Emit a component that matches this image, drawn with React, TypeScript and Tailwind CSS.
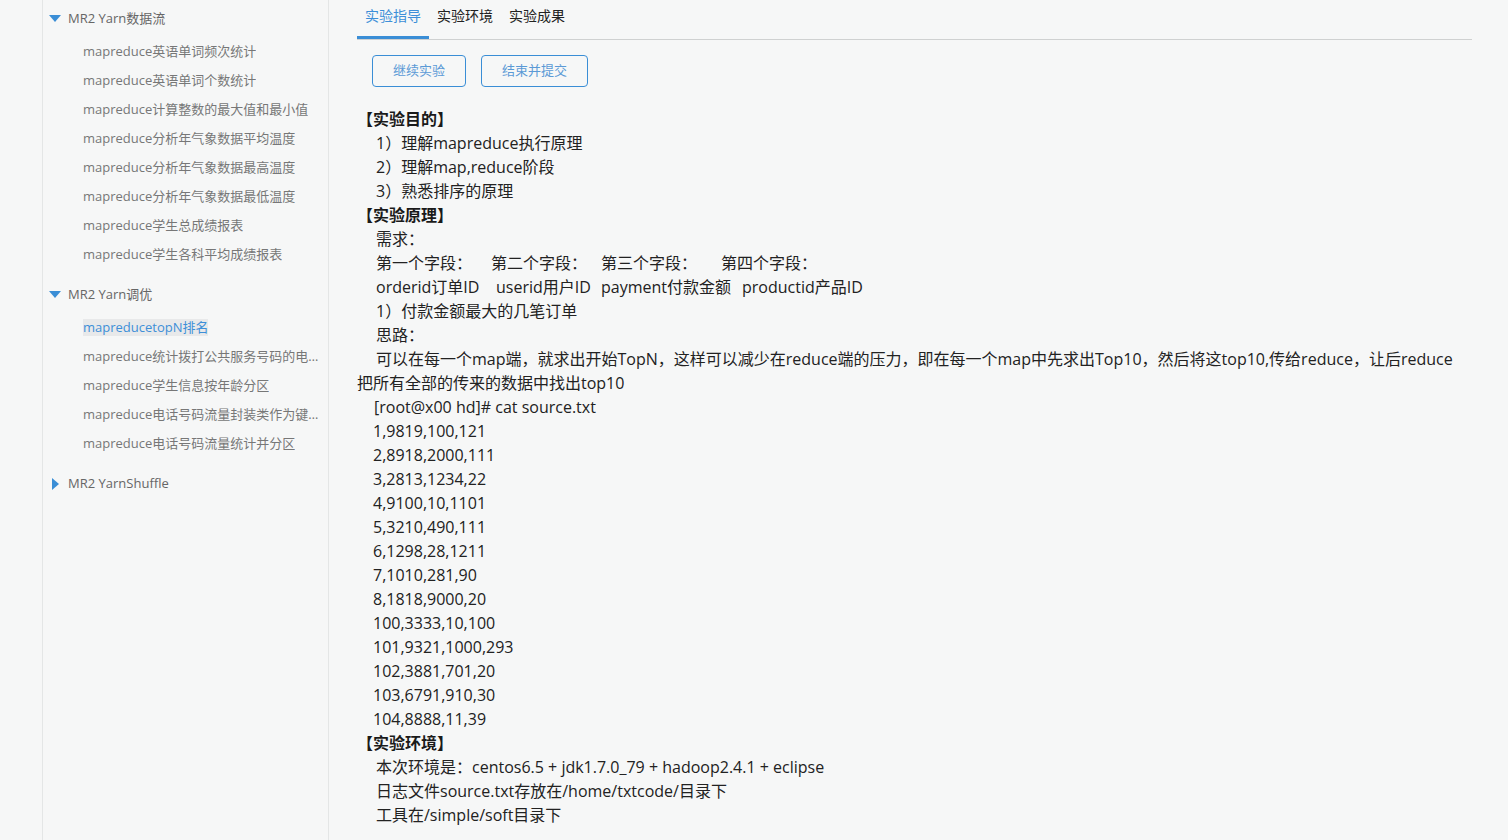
import React from "react";

type Group = {
  title: string;
  open: boolean;
  items: string[];
};

const groups: Group[] = [
  {
    title: "MR2 Yarn数据流",
    open: true,
    items: [
      "mapreduce英语单词频次统计",
      "mapreduce英语单词个数统计",
      "mapreduce计算整数的最大值和最小值",
      "mapreduce分析年气象数据平均温度",
      "mapreduce分析年气象数据最高温度",
      "mapreduce分析年气象数据最低温度",
      "mapreduce学生总成绩报表",
      "mapreduce学生各科平均成绩报表",
    ],
  },
  {
    title: "MR2 Yarn调优",
    open: true,
    items: [
      "mapreducetopN排名",
      "mapreduce统计拨打公共服务号码的电话信息",
      "mapreduce学生信息按年龄分区",
      "mapreduce电话号码流量封装类作为键值对",
      "mapreduce电话号码流量统计并分区",
    ],
  },
  { title: "MR2 YarnShuffle", open: false, items: [] },
];

const dataLines = [
  "1,9819,100,121",
  "2,8918,2000,111",
  "3,2813,1234,22",
  "4,9100,10,1101",
  "5,3210,490,111",
  "6,1298,28,1211",
  "7,1010,281,90",
  "8,1818,9000,20",
  "100,3333,10,100",
  "101,9321,1000,293",
  "102,3881,701,20",
  "103,6791,910,30",
  "104,8888,11,39",
];

function Caret({ open }: { open: boolean }) {
  return (
    <span className="w-[12px] h-[12px] flex items-center justify-center shrink-0">
      {open ? (
        <svg width="12" height="7" viewBox="0 0 12 7">
          <path d="M0 0 L12 0 L6 7 Z" fill="#3a8ed6" />
        </svg>
      ) : (
        <svg width="7" height="12" viewBox="0 0 7 12">
          <path d="M0 0 L7 6 L0 12 Z" fill="#3a8ed6" />
        </svg>
      )}
    </span>
  );
}

function Sidebar() {
  return (
    <aside className="w-[287px] shrink-0 ml-[42px] border-x border-[#e4e6e6] min-h-[840px] pt-[4px]">
      {groups.map((g) => (
        <div key={g.title} className="mb-[11px]">
          {/* group header */}
          <div className="h-[29px] flex items-center gap-[7px] pl-[6px] text-[13px] text-[#666]">
            <Caret open={g.open} />
            <span>{g.title}</span>
          </div>
          {g.open && (
            <ul className="mt-[4px]">
              {g.items.map((item) => {
                const active = item === "mapreducetopN排名";
                return (
                  <li
                    key={item}
                    className="h-[29px] flex items-center pl-[40px] pr-[8px] text-[13px] min-w-0"
                  >
                    <span
                      className={
                        active
                          ? "bg-[#e8e9ea] text-[#3d8fd8] leading-[17px]"
                          : "text-[#777] truncate"
                      }
                    >
                      {item}
                    </span>
                  </li>
                );
              })}
            </ul>
          )}
        </div>
      ))}
    </aside>
  );
}

function Heading({ children }: { children: React.ReactNode }) {
  return <div className="font-bold text-[#1a1a1a]">{children}</div>;
}

function Line({ children }: { children: React.ReactNode }) {
  return <div className="pl-[19px]">{children}</div>;
}

export default function App() {
  return (
    <div className="min-h-[840px] bg-[#f6f7f7] flex font-['Open_Sans','Noto_Sans_CJK_SC',sans-serif] overflow-hidden">
      <Sidebar />

      <main className="flex-1 pl-[28px] pr-[36px]">
        {/* Tabs */}
        <div className="flex border-b border-[#cfd1d1] h-[40px] text-[14px]">
          <div className="h-[39px] px-2 pt-[6px] leading-5 text-[#3d8fd8] border-b-[3px] border-[#3a8ed6]">
            实验指导
          </div>
          <div className="h-[39px] px-2 pt-[6px] leading-5 text-[#222]">实验环境</div>
          <div className="h-[39px] px-2 pt-[6px] leading-5 text-[#222]">实验成果</div>
        </div>

        {/* Buttons */}
        <div className="flex gap-[15px] pl-[15px] mt-[15px]">
          <button className="w-[94px] h-[32px] border border-[#3a8ed6] rounded-[4px] text-[13px] text-[#5b9ad6]">
            继续实验
          </button>
          <button className="w-[107px] h-[32px] border border-[#3a8ed6] rounded-[4px] text-[13px] text-[#5b9ad6]">
            结束并提交
          </button>
        </div>

        {/* Guide content */}
        <div className="mt-[20px] text-[16px] leading-[24px] text-[#222]">
          <Heading>【实验目的】</Heading>
          <Line>1）理解mapreduce执行原理</Line>
          <Line>2）理解map,reduce阶段</Line>
          <Line>3）熟悉排序的原理</Line>

          <Heading>【实验原理】</Heading>
          <Line>需求：</Line>
          <Line>
            <span className="inline-block w-[115px]">第一个字段：</span>
            <span className="inline-block w-[110px]">第二个字段：</span>
            <span className="inline-block w-[120px]">第三个字段：</span>
            <span>第四个字段：</span>
          </Line>
          <Line>
            <span className="inline-block w-[120px]">orderid订单ID</span>
            <span className="inline-block w-[105px]">userid用户ID</span>
            <span className="inline-block w-[141px]">payment付款金额</span>
            <span>productid产品ID</span>
          </Line>
          <Line>1）付款金额最大的几笔订单</Line>
          <Line>思路：</Line>
          <div>
            <span className="pl-[19px] whitespace-nowrap">
              可以在每一个map端，就求出开始TopN，这样可以减少在reduce端的压力，即在每一个map中先求出Top10，然后将这top10,传给reduce，让后reduce
            </span>
            <br />
            把所有全部的传来的数据中找出top10
          </div>
          <div className="pl-[17px]">[root@x00 hd]# cat source.txt</div>
          {dataLines.map((l) => (
            <div key={l} className="pl-[16px]">
              {l}
            </div>
          ))}

          <Heading>【实验环境】</Heading>
          <Line>本次环境是：centos6.5 + jdk1.7.0_79 + hadoop2.4.1 + eclipse</Line>
          <Line>日志文件source.txt存放在/home/txtcode/目录下</Line>
          <Line>工具在/simple/soft目录下</Line>
        </div>
      </main>
    </div>
  );
}
